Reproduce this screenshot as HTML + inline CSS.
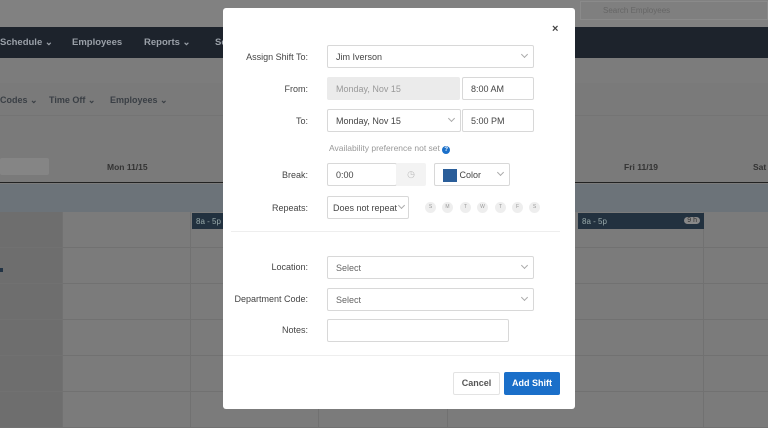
<!DOCTYPE html>
<html><head><meta charset="utf-8"><style>
*{box-sizing:border-box;margin:0;padding:0}
body{width:768px;height:427px;overflow:hidden;position:relative;background:#7b7b7b;font-family:"Liberation Sans",sans-serif;font-size:9px;color:#333}
.abs{position:absolute;white-space:nowrap}
.topbar{left:0;top:0;width:768px;height:27px;background:#818181}
.search{left:580px;top:1px;width:188px;height:19px;border:1px solid #8a8a8a;background:#7f7f7f;color:#666;padding:4px 0 0 22px;font-size:8px}
.nav{left:0;top:27px;width:768px;height:31px;background:#1d232c;color:#9aa0a8;font-size:9.5px;font-weight:bold}
.nav span{position:absolute;top:10px}
.sub{left:0;top:58px;width:768px;height:25px;background:#7c7c7c}
.filt{left:0;top:83px;width:768px;height:33px;background:#7a7a7a;border-bottom:1px solid #747474;color:#3a3f45;font-weight:bold;font-size:9px}
.filt span{position:absolute;top:12px}
.hdr{left:0;top:116px;width:768px;height:67px;background:#7a7a7a;border-bottom:1px solid #222;color:#333;font-weight:bold;font-size:8.5px}
.band{left:0;top:184px;width:768px;height:28px;background:#6c7379}
.row{left:0;width:768px;height:36px;border-bottom:1px solid #717171}
.vl{top:212px;width:1px;height:215px;background:#717171}
.shift{background:#22313f;color:#9aa;font-size:8px;height:16px;padding:4px 4px}
.modal{left:223px;top:8px;width:352px;height:401px;background:#fff;border-radius:3px}
.lbl{position:absolute;right:267px;font-size:9px;color:#444;text-align:right;white-space:nowrap}
.inp{position:absolute;border:1px solid #d8d8d8;border-radius:2px;height:23px;font-size:9px;color:#444;padding:6px 8px;background:#fff;white-space:nowrap}
.chev{position:absolute;right:6px;top:6px;width:5px;height:5px;border-right:1px solid #aaa;border-bottom:1px solid #aaa;transform:rotate(45deg)}
.day{position:absolute;top:194px;width:11px;height:11px;border-radius:50%;background:#eee;color:#999;font-size:5px;text-align:center;line-height:11px}
</style></head><body>
<div class="abs topbar"></div>
<div class="abs search">Search Employees</div>
<div class="abs nav"><span style="left:0">Schedule ⌄</span><span style="left:72px">Employees</span><span style="left:144px">Reports ⌄</span><span style="left:215px">Se</span>
<div class="abs" style="left:15px;top:29px;width:0;height:0;border-left:7px solid transparent;border-right:7px solid transparent;border-top:6px solid #1d232c"></div></div>
<div class="abs sub"></div>
<div class="abs filt"><span style="left:0">Codes ⌄</span><span style="left:49px">Time Off ⌄</span><span style="left:110px">Employees ⌄</span></div>
<div class="abs hdr">
<div class="abs" style="left:0;top:42px;width:49px;height:17px;background:#858585;border-radius:2px"></div>
<span class="abs" style="left:107px;top:46px">Mon 11/15</span>
<span class="abs" style="left:624px;top:46px">Fri 11/19</span>
<span class="abs" style="left:753px;top:46px">Sat 11/20</span></div>
<div class="abs band"></div>
<div class="abs" style="left:0;top:212px;width:62px;height:215px;background:#6e6e6e"></div>
<div class="abs row" style="top:212px"></div><div class="abs row" style="top:248px"></div><div class="abs row" style="top:284px"></div><div class="abs row" style="top:320px"></div><div class="abs row" style="top:356px"></div><div class="abs row" style="top:392px"></div>
<div class="abs vl" style="left:62px"></div><div class="abs vl" style="left:190px"></div><div class="abs vl" style="left:318px"></div><div class="abs vl" style="left:447px"></div><div class="abs vl" style="left:703px"></div>
<div class="abs shift" style="left:192px;top:213px;width:40px">8a - 5p</div>
<div class="abs shift" style="left:578px;top:213px;width:126px">8a - 5p<span style="float:right;background:#888;color:#333;border-radius:6px;padding:0 3px;font-size:7px">9 h</span></div>
<div class="abs" style="left:0;top:268px;width:3px;height:4px;background:#234"></div>

<div class="abs modal">
<div class="abs" style="left:329px;top:15px;font-size:11px;color:#444;font-weight:bold">×</div>
<div class="lbl" style="top:44px">Assign Shift To:</div>
<div class="inp" style="left:104px;top:37px;width:207px">Jim Iverson<div class="chev"></div></div>
<div class="lbl" style="top:76px">From:</div>
<div class="inp" style="left:104px;top:69px;width:133px;background:#ebebeb;border-color:#ebebeb;color:#999">Monday, Nov 15</div>
<div class="inp" style="left:239px;top:69px;width:72px">8:00 AM</div>
<div class="lbl" style="top:108px">To:</div>
<div class="inp" style="left:104px;top:101px;width:134px">Monday, Nov 15<div class="chev"></div></div>
<div class="inp" style="left:239px;top:101px;width:72px">5:00 PM</div>
<div class="abs" style="left:106px;top:135px;font-size:8.5px;color:#999">Availability preference not set <span style="display:inline-block;width:8px;height:8px;border-radius:50%;background:#1a6fc9;color:#fff;font-size:6px;text-align:center;line-height:8px;font-weight:bold">?</span></div>
<div class="lbl" style="top:162px">Break:</div>
<div class="inp" style="left:104px;top:155px;width:70px">0:00</div>
<div class="inp" style="left:173px;top:155px;width:30px;background:#f3f3f3;border-color:#f3f3f3;color:#bbb;text-align:center;padding:5px 0">◷</div>
<div class="inp" style="left:211px;top:155px;width:76px;padding:5px 8px"><span style="display:inline-block;width:14px;height:13px;background:#2a5e9a;vertical-align:middle"></span> Color<div class="chev"></div></div>
<div class="lbl" style="top:195px">Repeats:</div>
<div class="inp" style="left:104px;top:188px;width:82px;padding:6px 5px">Does not repeat<div class="chev" style="right:4px"></div></div>
<div class="day" style="left:202px">S</div><div class="day" style="left:219px">M</div><div class="day" style="left:237px">T</div><div class="day" style="left:254px">W</div><div class="day" style="left:272px">T</div><div class="day" style="left:289px">F</div><div class="day" style="left:306px">S</div>
<div class="abs" style="left:8px;top:223px;width:329px;height:1px;background:#eee"></div>
<div class="lbl" style="top:254px">Location:</div>
<div class="inp" style="left:104px;top:248px;width:207px;color:#666">Select<div class="chev"></div></div>
<div class="lbl" style="top:286px">Department Code:</div>
<div class="inp" style="left:104px;top:280px;width:207px;color:#666">Select<div class="chev"></div></div>
<div class="lbl" style="top:317px">Notes:</div>
<div class="inp" style="left:104px;top:311px;width:182px"></div>
<div class="abs" style="left:0;top:347px;width:352px;height:1px;background:#eee"></div>
<div class="abs" style="left:230px;top:364px;width:47px;height:23px;border:1px solid #e3e3e3;border-radius:2px;font-size:9px;font-weight:bold;color:#555;text-align:center;line-height:21px">Cancel</div>
<div class="abs" style="left:281px;top:364px;width:56px;height:23px;background:#1a6fc9;border-radius:2px;font-size:9px;font-weight:bold;color:#fff;text-align:center;line-height:23px">Add Shift</div>
</div>
</body></html>
